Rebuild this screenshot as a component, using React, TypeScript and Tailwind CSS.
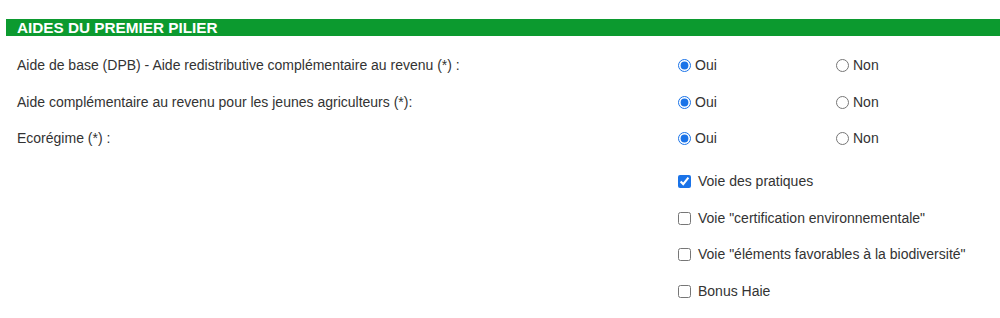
import { useState } from 'react';

const questions = [
    { id: 'dpb', label: 'Aide de base (DPB) - Aide redistributive complémentaire au revenu (*) :' },
    { id: 'ja', label: 'Aide complémentaire au revenu pour les jeunes agriculteurs (*):' },
    { id: 'eco', label: 'Ecorégime (*) :' },
];

const voies = [
    { id: 'pratiques', label: 'Voie des pratiques', checked: true },
    { id: 'certif', label: 'Voie "certification environnementale"', checked: false },
    { id: 'biodiv', label: 'Voie "éléments favorables à la biodiversité"', checked: false },
    { id: 'haie', label: 'Bonus Haie', checked: false },
];

export default function App() {
    const [answers, setAnswers] = useState<Record<string, string>>({ dpb: 'oui', ja: 'oui', eco: 'oui' });
    const [checks, setChecks] = useState<Record<string, boolean>>(
        Object.fromEntries(voies.map(v => [v.id, v.checked]))
    );

    return (
        <div className="w-[1000px] h-[318px] bg-white text-[14px] text-[#333] overflow-hidden"
             style={{ fontFamily: '"Liberation Sans", Arial, sans-serif' }}>
            <div className="pt-[19px] pl-[6px]">
                <div className="h-[17px] bg-[#0c9a2f] pl-[11px] flex items-center">
                    <span className="text-white font-bold text-[15.3px] leading-none">AIDES DU PREMIER PILIER</span>
                </div>
            </div>

            <div className="pl-[17px] pt-[11px]">
                {questions.map(q => (
                    <div key={q.id} className="flex items-center h-[36.7px]">
                        <div className="w-[661px]">{q.label}</div>
                        <label className="w-[158px] flex items-center gap-[4px]">
                            <input type="radio" name={q.id} checked={answers[q.id] === 'oui'}
                                   onChange={() => setAnswers({ ...answers, [q.id]: 'oui' })}
                                   className="m-0 w-[13px] h-[13px] accent-[#1a73e8]" />
                            Oui
                        </label>
                        <label className="flex items-center gap-[4px]">
                            <input type="radio" name={q.id} checked={answers[q.id] === 'non'}
                                   onChange={() => setAnswers({ ...answers, [q.id]: 'non' })}
                                   className="m-0 w-[13px] h-[13px] accent-[#1a73e8]" />
                            Non
                        </label>
                    </div>
                ))}

                <div className="pl-[661px] pt-[6px]">
                    {voies.map(v => (
                        <label key={v.id} className="flex items-center gap-[7px] h-[36.7px]">
                            <input type="checkbox" checked={checks[v.id]}
                                   onChange={() => setChecks({ ...checks, [v.id]: !checks[v.id] })}
                                   className="m-0 w-[13px] h-[13px] accent-[#1a73e8]" />
                            <span>{v.label}</span>
                        </label>
                    ))}
                </div>
            </div>
        </div>
    );
}
